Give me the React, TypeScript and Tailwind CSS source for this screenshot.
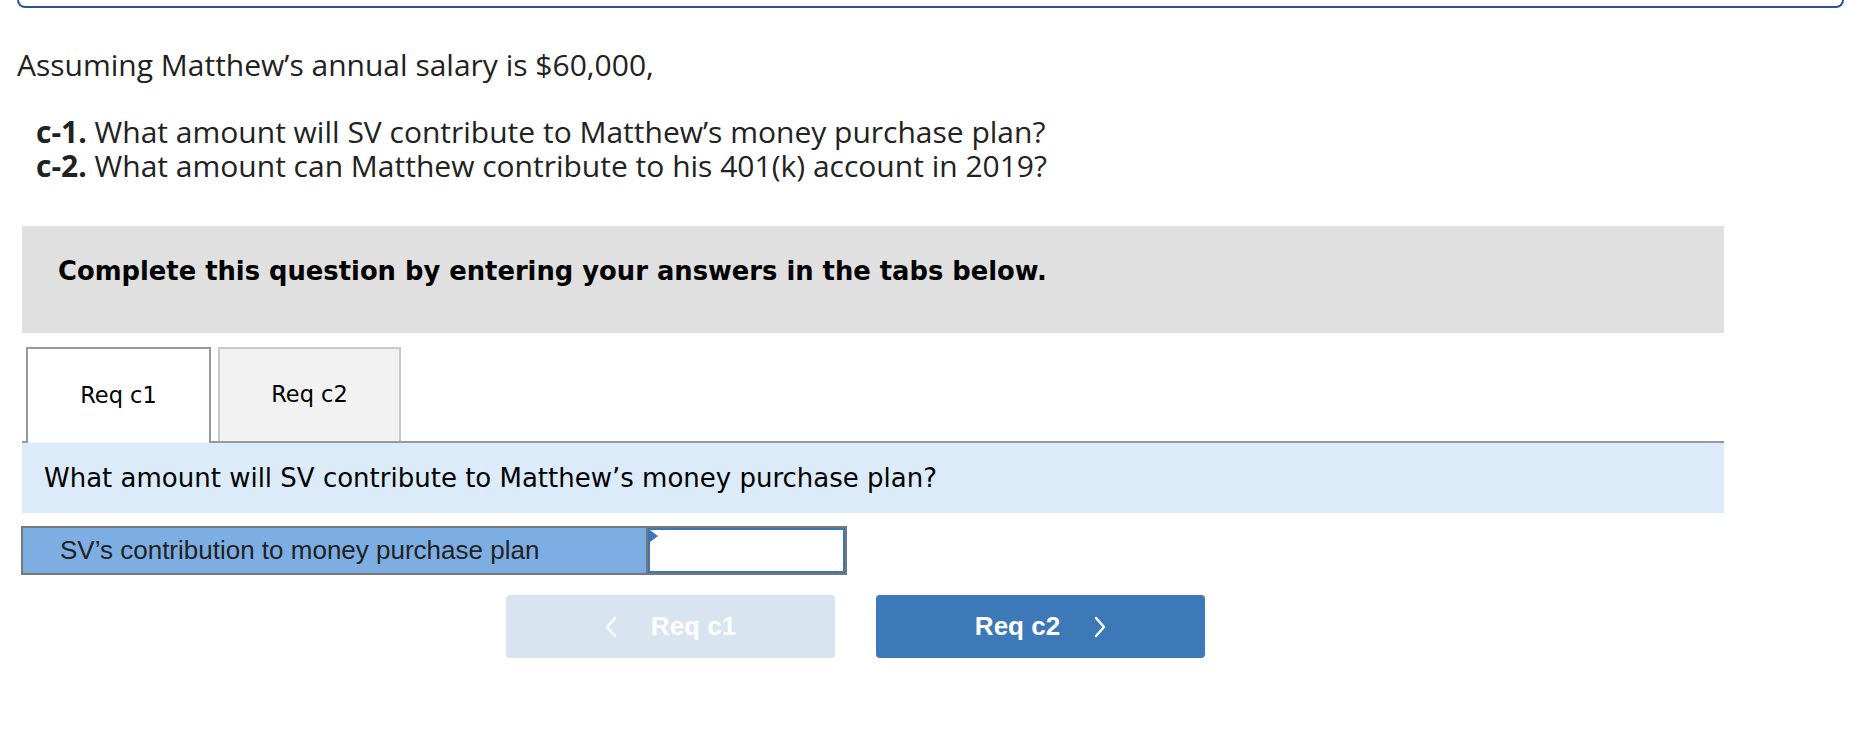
import React from "react";

function Chevron({ dir }: { dir: "left" | "right" }) {
  const pts = dir === "left" ? "10,2 2,11 10,20" : "2,2 10,11 2,20";
  return (
    <svg width="12" height="22" viewBox="0 0 12 22" fill="none" stroke="white" strokeWidth="2.4" strokeLinecap="round" strokeLinejoin="round">
      <polyline points={pts} />
    </svg>
  );
}

export default function App() {
  return (
    <div className="h-[734px] w-full overflow-hidden bg-white">
      {/* outer question frame (only the bottom edge is on screen) */}
      <div className="ml-[17px] h-[8px] w-[1827px] rounded-b-[10px] border-2 border-t-0 border-[#2a5590]" />

      <div className="font-['Open_Sans','Liberation_Sans',sans-serif] text-[30px] text-[#222]">
        <p className="mt-[40px] ml-[17px] leading-[34px]">Assuming Matthew’s annual salary is $60,000,</p>
        <div className="mt-[33px] ml-[36px] leading-[34px]">
          <p>
            <span className="font-bold">c-1.</span> What amount will SV contribute to Matthew’s money purchase plan?
          </p>
          <p>
            <span className="font-bold">c-2.</span> What amount can Matthew contribute to his 401(k) account in 2019?
          </p>
        </div>
      </div>

      <div className="ml-[22px] mt-[43px] w-[1702px] font-['DejaVu_Sans','Verdana',sans-serif] text-black">
        {/* instructions */}
        <div className="h-[107px] bg-[#e0e0e0] pl-[36px] pt-[30px]">
          <p className="text-[25.8px] font-bold leading-[30px]">Complete this question by entering your answers in the tabs below.</p>
        </div>

        {/* tabs */}
        <div className="mt-[14px] flex items-end border-b-2 border-[#999] pl-[4px]">
          <div className="-mb-[2px] flex h-[96px] w-[185px] items-center justify-center border-2 border-b-0 border-[#999] bg-white text-[22.5px]">
            Req c1
          </div>
          <div className="ml-[7px] flex h-[94px] w-[183px] items-center justify-center border-2 border-b-0 border-[#c9c9c9] bg-[#f2f2f2] text-[22.5px]">
            Req c2
          </div>
        </div>

        {/* active tab question */}
        <div className="flex h-[70px] items-center bg-[#dcebfa] pl-[22px] text-[26px]">
          What amount will SV contribute to Matthew’s money purchase plan?
        </div>
      </div>

      {/* answer row */}
      <div className="ml-[21px] mt-[13px] flex h-[49px] w-[826px] border-2 border-[#777] font-['Liberation_Sans','Arial',sans-serif]">
        <div className="flex w-[625px] items-center border-r-2 border-[#777] bg-[#7daee3] pl-[37px] text-[26px] text-[#222]">
          SV’s contribution to money purchase plan
        </div>
        <div className="relative flex-1 border-2 border-[#3b75bb] bg-white">
          <span className="absolute left-0 top-0 h-0 w-0 border-y-[6px] border-l-[8px] border-y-transparent border-l-[#3b75bb]" />
        </div>
      </div>

      {/* navigation */}
      <div className="ml-[506px] mt-[20px] flex gap-[41px] font-['Liberation_Sans','Arial',sans-serif] text-[26px] font-bold text-white">
        <button className="flex h-[63px] w-[329px] items-center justify-center gap-[34px] rounded-[4px] bg-[#d9e4f1]">
          <Chevron dir="left" />
          <span>Req c1</span>
        </button>
        <button className="flex h-[63px] w-[329px] items-center justify-center gap-[34px] rounded-[4px] bg-[#3d78b8]">
          <span>Req c2</span>
          <Chevron dir="right" />
        </button>
      </div>
    </div>
  );
}
